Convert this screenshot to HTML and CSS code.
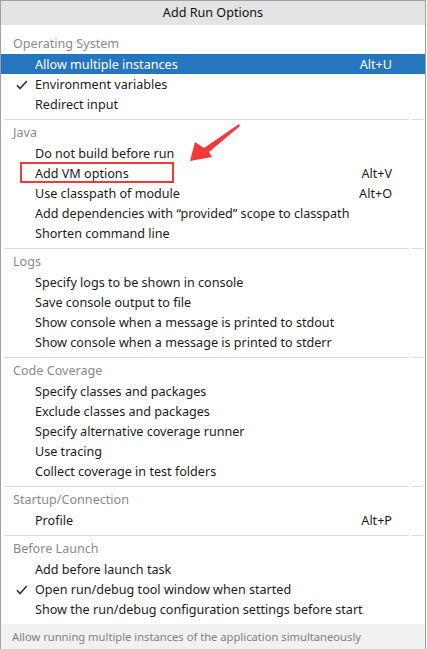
FILE: index.html
```html
<!DOCTYPE html>
<html lang="en">
<head>
  <meta charset="UTF-8">
  <meta name="viewport" content="width=device-width, initial-scale=1.0">
  <title>Add Run Options</title>
  <link rel="stylesheet" href="styles.css">
</head>
<body>
  <div class="popup">
    <div class="popup__title">Add Run Options</div>

    <div class="group group--first">
      <div class="group__label">Operating System</div>
      <div class="option option--selected"><span class="option__text">Allow multiple instances</span><span class="option__key">Alt+U</span></div>
      <div class="option option--checked">
        <svg class="option__check" width="12" height="10" viewBox="0 0 12 10"><path d="M1 5.2 L4 8.6 L10.8 1" fill="none" stroke="#333" stroke-width="1.6"/></svg>
        <span class="option__text">Environment variables</span>
      </div>
      <div class="option"><span class="option__text">Redirect input</span></div>
    </div>

    <div class="sep"><span class="sep__line"></span><span class="sep__tail"></span></div>

    <div class="group">
      <div class="group__label">Java</div>
      <div class="option"><span class="option__text">Do not build before run</span></div>
      <div class="option"><span class="option__text">Add VM options</span><span class="option__key">Alt+V</span></div>
      <div class="option"><span class="option__text">Use classpath of module</span><span class="option__key">Alt+O</span></div>
      <div class="option"><span class="option__text">Add dependencies with “provided” scope to classpath</span></div>
      <div class="option"><span class="option__text">Shorten command line</span></div>
    </div>

    <div class="sep"><span class="sep__line"></span><span class="sep__tail"></span></div>

    <div class="group">
      <div class="group__label">Logs</div>
      <div class="option"><span class="option__text">Specify logs to be shown in console</span></div>
      <div class="option"><span class="option__text">Save console output to file</span></div>
      <div class="option"><span class="option__text">Show console when a message is printed to stdout</span></div>
      <div class="option"><span class="option__text">Show console when a message is printed to stderr</span></div>
    </div>

    <div class="sep"><span class="sep__line"></span><span class="sep__tail"></span></div>

    <div class="group">
      <div class="group__label">Code Coverage</div>
      <div class="option"><span class="option__text">Specify classes and packages</span></div>
      <div class="option"><span class="option__text">Exclude classes and packages</span></div>
      <div class="option"><span class="option__text">Specify alternative coverage runner</span></div>
      <div class="option"><span class="option__text">Use tracing</span></div>
      <div class="option"><span class="option__text">Collect coverage in test folders</span></div>
    </div>

    <div class="sep"><span class="sep__line"></span><span class="sep__tail"></span></div>

    <div class="group">
      <div class="group__label">Startup/Connection</div>
      <div class="option"><span class="option__text">Profile</span><span class="option__key">Alt+P</span></div>
    </div>

    <div class="sep"><span class="sep__line"></span><span class="sep__tail"></span></div>

    <div class="group">
      <div class="group__label">Before Launch</div>
      <div class="option"><span class="option__text">Add before launch task</span></div>
      <div class="option option--checked">
        <svg class="option__check" width="12" height="10" viewBox="0 0 12 10"><path d="M1 5.2 L4 8.6 L10.8 1" fill="none" stroke="#333" stroke-width="1.6"/></svg>
        <span class="option__text">Open run/debug tool window when started</span>
      </div>
      <div class="option"><span class="option__text">Show the run/debug configuration settings before start</span></div>
    </div>

    <div class="popup__footer">Allow running multiple instances of the application simultaneously</div>

    <!-- annotation drawn over the screenshot -->
    <div class="mark-box"></div>
    <svg class="mark-arrow" width="60" height="45" viewBox="185 120 60 45">
      <polygon points="239,124 240,126 209,152 212,157 190,161 195,142 204,148" fill="#f53838"/>
    </svg>
  </div>
</body>
</html>
```

FILE: styles.css
```css
:root {
  --border: #a0a0a0;
  --line: #dadada;
  --muted: #8a8a8a;
  --text: #1b1b1b;
  --select: #2675bf;
  --row: 20px;
}
*,
*::after,
*::before {
  box-sizing: border-box;
}
body {
  margin: 0;
  background: #fff;
  font-family: 'Noto Sans', sans-serif;
  font-size: 12.6px;
  color: var(--text);
}
.popup {
  position: relative;
  display: flex;
  flex-direction: column;
  width: 426px;
  height: 649px;
  border: 1px solid var(--border);
  background: #fff;
}
.popup__title {
  height: 24px;
  line-height: 24px;
  text-align: center;
  background: #e4e4e4;
  color: #111;
}
.group {
  padding: 3px 0 5px;
}
.group--first {
  padding-top: 9px;
}
.group__label {
  height: var(--row);
  line-height: var(--row);
  padding-left: 12px;
  color: var(--muted);
}
.option {
  position: relative;
  display: flex;
  align-items: center;
  height: var(--row);
  padding: 0 33px 0 34px;
}
.option__text {
  flex: 1;
  white-space: nowrap;
}
.option__key {
  white-space: nowrap;
}
.option--selected {
  background: var(--select);
  color: #fff;
}
.option__check {
  position: absolute;
  left: 15px;
  top: 6px;
}
.sep {
  display: flex;
  gap: 3px;
  padding: 0 2px 0 3px;
}
.sep__line {
  flex: 1;
  border-top: 1px solid var(--line);
}
.sep__tail {
  width: 11px;
  border-top: 1px solid var(--line);
}
.popup__footer {
  margin-top: auto;
  height: 25px;
  line-height: 25px;
  padding-left: 11px;
  background: #f1f1f1;
  color: #808080;
  font-size: 11.2px;
  white-space: nowrap;
}
.mark-box {
  position: absolute;
  left: 19px;
  top: 161px;
  width: 154px;
  height: 21px;
  border: 2px solid #f53838;
}
.mark-arrow {
  position: absolute;
  left: 184px;
  top: 119px;
}
```
